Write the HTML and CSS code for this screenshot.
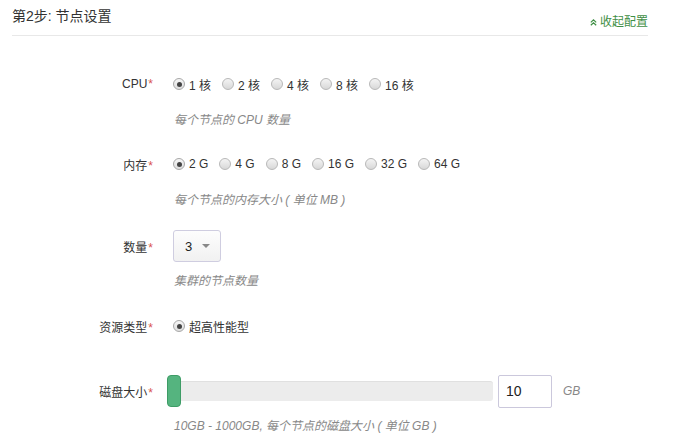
FILE: index.html
```html
<!DOCTYPE html>
<html lang="zh-CN">
<head>
<meta charset="utf-8">
<link rel="stylesheet" href="styles.css">
</head>
<body>
<div class="wrap">
  <div class="header">
    <div class="title">第2步: 节点设置</div>
    <a class="collapse"><svg class="chev" width="7" height="7" viewBox="0 0 7 7"><path d="M0.8 3.4 L3.5 0.9 L6.2 3.4 M0.8 6.2 L3.5 3.7 L6.2 6.2" fill="none" stroke="#3f8f45" stroke-width="1.2"/></svg>收起配置</a>
  </div>

  <div class="group g-cpu">
    <div class="row">
      <div class="label">CPU<span class="req">*</span></div>
      <div class="control radios">
        <span class="opt"><span class="radio on"></span>1 核</span>
        <span class="opt"><span class="radio"></span>2 核</span>
        <span class="opt"><span class="radio"></span>4 核</span>
        <span class="opt"><span class="radio"></span>8 核</span>
        <span class="opt"><span class="radio"></span>16 核</span>
      </div>
    </div>
    <div class="help">每个节点的 CPU 数量</div>
  </div>

  <div class="group g-mem">
    <div class="row">
      <div class="label">内存<span class="req">*</span></div>
      <div class="control radios">
        <span class="opt"><span class="radio on"></span>2 G</span>
        <span class="opt"><span class="radio"></span>4 G</span>
        <span class="opt"><span class="radio"></span>8 G</span>
        <span class="opt"><span class="radio"></span>16 G</span>
        <span class="opt"><span class="radio"></span>32 G</span>
        <span class="opt"><span class="radio"></span>64 G</span>
      </div>
    </div>
    <div class="help">每个节点的内存大小 ( 单位 MB )</div>
  </div>

  <div class="group g-count">
    <div class="row">
      <div class="label">数量<span class="req">*</span></div>
      <div class="control">
        <div class="select"><span>3</span><span class="caret"></span></div>
      </div>
    </div>
    <div class="help">集群的节点数量</div>
  </div>

  <div class="group g-type">
    <div class="row">
      <div class="label">资源类型<span class="req">*</span></div>
      <div class="control radios">
        <span class="opt"><span class="radio on"></span>超高性能型</span>
      </div>
    </div>
  </div>

  <div class="group g-disk">
    <div class="row">
      <div class="label">磁盘大小<span class="req">*</span></div>
      <div class="control disk">
        <div class="slider"><span class="thumb"></span></div>
        <div class="num">10</div>
        <span class="unit">GB</span>
      </div>
    </div>
    <div class="help">10GB - 1000GB, 每个节点的磁盘大小 ( 单位 GB )</div>
  </div>
</div>
</body>
</html>
```
FILE: styles.css
```css
* { box-sizing: border-box; }
html, body { margin: 0; padding: 0; background: #fff; }
body {
  font-family: "Liberation Sans", "Noto Sans CJK SC", Arial, sans-serif;
  font-size: 12px;
  color: #333;
}
.wrap {
  width: 636px;
  margin-left: 12px;
}
.header {
  display: flex;
  justify-content: space-between;
  align-items: flex-end;
  height: 36px;
  border-bottom: 1px solid #e8e8e8;
  padding-bottom: 6px;
}
.title {
  font-size: 14px;
  line-height: 20px;
  color: #333;
  align-self: flex-start;
  margin-top: 6px;
}
.collapse {
  color: #3f8f45;
  font-size: 12px;
  line-height: 14px;
  display: flex;
  align-items: center;
}
.chev { margin-right: 3px; }

.row {
  display: flex;
  align-items: center;
  height: 32px;
}
.label {
  width: 143px;
  text-align: right;
  padding-right: 2px;
  flex: none;
}
.req { color: #d9534f; margin-left: 1px; }
.control {
  margin-left: 18px;
  display: flex;
  align-items: center;
}
.radios { gap: 11px; }
.opt {
  display: inline-flex;
  align-items: center;
  white-space: nowrap;
}
.radio {
  width: 12px;
  height: 12px;
  border-radius: 50%;
  border: 1px solid #b8b8b8;
  background: linear-gradient(#f4f4f4, #d8d8d8);
  margin-right: 4px;
  position: relative;
  flex: none;
}
.radio.on {
  background: linear-gradient(#f6f6f6, #dedede);
  border-color: #a8a8a8;
}
.radio.on::after {
  content: "";
  position: absolute;
  left: 2.5px;
  top: 2.5px;
  width: 5px;
  height: 5px;
  border-radius: 50%;
  background: #444;
}
.help {
  margin-left: 162px;
  color: #888;
  font-style: italic;
  line-height: 16px;
}

.g-cpu { margin-top: 32px; }
.g-cpu .help { margin-top: 12px; }
.g-mem { margin-top: 20px; }
.g-mem .help { margin-top: 12px; }
.g-count { margin-top: 22px; }
.g-count .help { margin-top: 11px; }
.g-type { margin-top: 21px; }
.g-disk { margin-top: 33px; }
.g-disk .help { margin-top: 11px; }

.select {
  width: 48px;
  height: 32px;
  border: 1px solid #cfcde0;
  border-radius: 3px;
  background: linear-gradient(#fdfdfd, #f1f1f1);
  display: flex;
  align-items: center;
  padding-left: 11px;
  font-size: 13px;
  color: #222;
}
.caret {
  margin-left: 10px;
  width: 0;
  height: 0;
  border-left: 4px solid transparent;
  border-right: 4px solid transparent;
  border-top: 4px solid #888;
}

.disk { margin-left: 12px; }
.slider {
  position: relative;
  width: 320px;
  height: 20px;
  background: #ececec;
  border-top: 1px solid #e0e0e0;
  border-radius: 3px;
  margin-left: 6px;
}
.thumb {
  position: absolute;
  left: -6px;
  top: -7px;
  width: 14px;
  height: 32px;
  border-radius: 4px;
  background: #55b47f;
  border: 1px solid #3e9c66;
}
.num {
  margin-left: 5px;
  width: 54px;
  height: 33px;
  border: 1px solid #cbc8dc;
  border-radius: 2px;
  display: flex;
  align-items: center;
  padding-left: 7px;
  font-size: 14px;
  color: #222;
}
.unit {
  margin-left: 11px;
  font-style: italic;
  color: #888;
}
```
